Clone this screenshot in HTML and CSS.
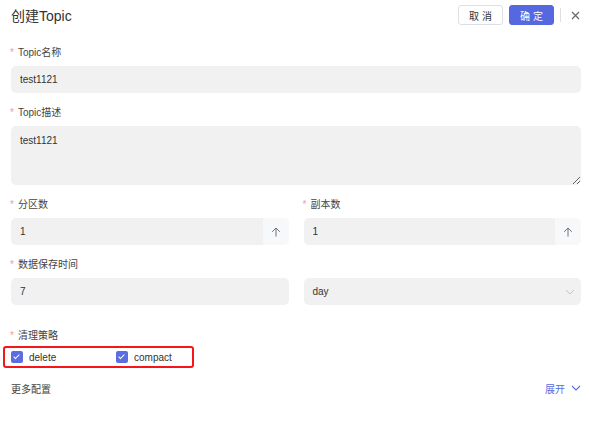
FILE: index.html
```html
<!DOCTYPE html>
<html lang="zh-CN">
<head>
  <meta charset="UTF-8" />
  <meta name="viewport" content="width=device-width, initial-scale=1.0" />
  <title>创建Topic</title>
  <link rel="stylesheet" href="styles.css">
</head>
<body>
  <div class="drawer">
    <div class="drawer-header">
      <h1>创建Topic</h1>
      <div class="header-actions">
        <button class="btn">取消</button>
        <button class="btn btn-primary">确定</button>
        <span class="divider"></span>
        <button class="close" aria-label="close">
          <svg width="9" height="9" viewBox="0 0 9 9"><path d="M1 1L8 8M8 1L1 8" stroke="#666" stroke-width="1.2" fill="none"/></svg>
        </button>
      </div>
    </div>

    <form class="form">
      <div class="field">
        <label class="required">Topic名称</label>
        <input class="input" type="text" value="test1121" />
      </div>

      <div class="field">
        <label class="required">Topic描述</label>
        <textarea class="input textarea">test1121</textarea>
      </div>

      <div class="row">
        <div class="field">
          <label class="required">分区数</label>
          <div class="number">
            <input class="input" type="text" value="1" />
            <span class="step">
              <svg width="10" height="10" viewBox="0 0 10 10"><path d="M5 9.5V1M1.2 4.8L5 1l3.8 3.8" stroke="#6b7280" stroke-width="1" fill="none"/></svg>
            </span>
          </div>
        </div>
        <div class="field">
          <label class="required">副本数</label>
          <div class="number">
            <input class="input" type="text" value="1" />
            <span class="step">
              <svg width="10" height="10" viewBox="0 0 10 10"><path d="M5 9.5V1M1.2 4.8L5 1l3.8 3.8" stroke="#6b7280" stroke-width="1" fill="none"/></svg>
            </span>
          </div>
        </div>
      </div>

      <div class="row row-wide">
        <div class="field">
          <label class="required">数据保存时间</label>
          <input class="input" type="text" value="7" />
        </div>
        <div class="field">
          <label>&nbsp;</label>
          <div class="select">
            <span>day</span>
            <svg width="10" height="6" viewBox="0 0 10 6"><path d="M1 1l4 4 4-4" stroke="#c0c4cc" stroke-width="1" fill="none"/></svg>
          </div>
        </div>
      </div>

      <div class="field field-check">
        <label class="required">清理策略</label>
        <div class="checkbox-group">
          <span class="checkbox"><i class="box"></i>delete</span>
          <span class="checkbox"><i class="box"></i>compact</span>
        </div>
      </div>

      <div class="more">
        <span>更多配置</span>
        <a class="expand">展开
          <svg width="10" height="6" viewBox="0 0 10 6"><path d="M1 1l4 4 4-4" stroke="#5b6de0" stroke-width="1.1" fill="none"/></svg>
        </a>
      </div>
    </form>
  </div>
</body>
</html>
```

FILE: styles.css
```css
/* Basic Reset */
*, *:before, *:after {
  box-sizing: border-box;
  margin: 0;
  padding: 0;
  font-family: "Liberation Sans", "Noto Sans CJK SC", Arial, sans-serif;
}

body {
  background: #ffffff;
  color: #333;
}

.drawer-header {
  display: flex;
  align-items: center;
  justify-content: space-between;
  height: 30px;
  padding: 0 9px 0 11px;
}

h1 {
  font-size: 14px;
  font-weight: normal;
  color: #333;
}

.header-actions {
  display: flex;
  align-items: center;
}

.btn {
  width: 45px;
  height: 20px;
  margin-left: 6px;
  border: 1px solid #dcdfe6;
  border-radius: 3px;
  background: #fff;
  color: #333;
  font-size: 10px;
  letter-spacing: 3px;
  text-indent: 3px;
  cursor: pointer;
}

.btn-primary {
  background: #5568e0;
  border-color: #5568e0;
  color: #fff;
}

.divider {
  width: 1px;
  height: 14px;
  margin: 0 10px 0 6px;
  background: #dcdfe6;
}

.close {
  display: flex;
  border: none;
  background: none;
  cursor: pointer;
}

.form {
  padding: 16px 8px 0 11px;
}

.field {
  margin-bottom: 13px;
}

.field label {
  display: block;
  height: 14px;
  line-height: 14px;
  margin-bottom: 6px;
  font-size: 10px;
  color: #444;
}

.field label.required:before {
  content: "*";
  display: inline-block;
  width: 8px;
  margin-left: -1px;
  color: #f59a9a;
  font-size: 10px;
}

.field-check label {
  margin-bottom: 3px;
}

.input {
  display: block;
  width: 100%;
  height: 27px;
  padding: 0 9px;
  border: none;
  border-radius: 5px;
  outline: none;
  background: #f1f1f1;
  color: #333;
  font-size: 10px;
}

.textarea {
  height: 59px;
  padding-top: 8px;
  line-height: 14px;
  resize: vertical;
}

.row {
  display: grid;
  grid-template-columns: 1fr 1fr;
  column-gap: 15px;
}

.row-wide {
  margin-bottom: 11px;
}

.number {
  display: flex;
  border-radius: 5px;
  overflow: hidden;
}

.number .input {
  border-radius: 0;
}

.step {
  display: flex;
  align-items: center;
  justify-content: center;
  flex: 0 0 26px;
  height: 27px;
  background: #f7f8fa;
}

.select {
  display: flex;
  align-items: center;
  justify-content: space-between;
  height: 27px;
  padding: 0 6px 0 9px;
  border-radius: 5px;
  background: #f1f1f1;
  font-size: 10px;
  color: #333;
}

.checkbox-group {
  display: flex;
  width: 191px;
  height: 22px;
  margin-left: -8px;
  padding: 3px 6px;
  border: 2px solid #f5161b;
  border-radius: 3px;
}

.checkbox {
  display: flex;
  flex: none;
  align-items: center;
  font-size: 10px;
  color: #333;
}

.checkbox:first-child {
  width: 105px;
}

.checkbox .box {
  position: relative;
  width: 12px;
  height: 12px;
  margin-right: 6px;
  border-radius: 2px;
  background: #5b6de0;
}

.checkbox .box:after {
  content: "";
  position: absolute;
  left: 4px;
  top: 2px;
  width: 3px;
  height: 6px;
  border: solid #fff;
  border-width: 0 1.2px 1.2px 0;
  transform: rotate(45deg);
}

.more {
  display: flex;
  align-items: center;
  justify-content: space-between;
  height: 14px;
  margin-top: 1px;
  font-size: 10px;
  color: #444;
}

.expand {
  display: flex;
  align-items: center;
  gap: 6px;
  color: #5b6de0;
  cursor: pointer;
}
```
